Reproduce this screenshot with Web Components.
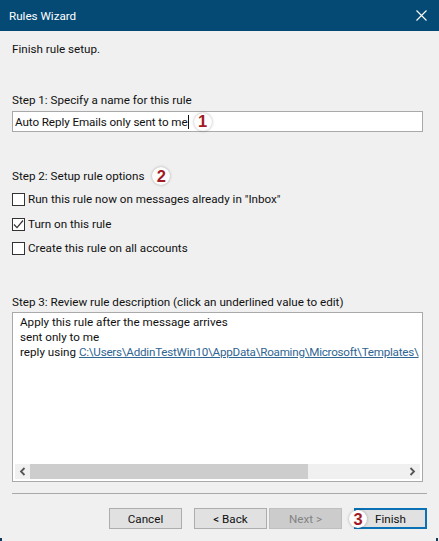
<!DOCTYPE html>
<html lang="en">
<head>
<meta charset="utf-8">
<title>Rules Wizard</title>
<style>
    html, body { margin: 0; height: 100%; background: #f0f0f0; }
    body { font: 11.65px Roboto, "Noto Sans", sans-serif; color: #111; }
    a { color: #2f6592; letter-spacing: -0.24px; }
</style>
</head>
<body>
<rules-wizard>
    <title-bar slot="title">Rules Wizard</title-bar>

    <div slot="intro">Finish rule setup.</div>

    <step-label slot="step1">Step 1: Specify a name for this rule</step-label>
    <name-field slot="step1">Auto Reply Emails only sent to me<step-badge slot="after">1</step-badge></name-field>

    <step-label slot="step2">Step 2: Setup rule options<step-badge>2</step-badge></step-label>
    <check-option slot="options">Run this rule now on messages already in "Inbox"</check-option>
    <check-option slot="options" checked>Turn on this rule</check-option>
    <check-option slot="options">Create this rule on all accounts</check-option>

    <step-label slot="step3">Step 3: Review rule description (click an underlined value to edit)</step-label>
    <description-box slot="step3">
        <div>Apply this rule after the message arrives</div>
        <div>sent only to me</div>
        <div>reply using <a href="#">C:\Users\AddinTestWin10\AppData\Roaming\Microsoft\Templates\</a></div>
    </description-box>

    <wizard-button slot="buttons">Cancel</wizard-button>
    <wizard-button slot="buttons" style="margin-left: 12px">&lt; Back</wizard-button>
    <wizard-button slot="buttons" style="margin-left: 2px" disabled>Next &gt;</wizard-button>
    <wizard-button slot="buttons" style="margin-left: 12px" focused>Finish<step-badge slot="badge">3</step-badge></wizard-button>
</rules-wizard>

<script>
// ventana principal del asistente
class RulesWizard extends HTMLElement {
    constructor() {
        super();
        this.attachShadow({ mode: "open" }).innerHTML = `
<style>
    :host { display: flex; flex-direction: column; position: relative; height: 541px; overflow: hidden; background: #f0f0f0; }
    .body { display: flex; flex-direction: column; padding: 0 12px; }
    .intro { height: 18px; line-height: 18px; margin-top: 9px; }
    .step1 { display: flex; flex-direction: column; margin-top: 33px; margin-right: 4px; }
    .step2 { margin-top: 35px; }
    .options { display: flex; flex-direction: column; gap: 11.5px; margin-top: 8px; }
    .step3 { display: flex; flex-direction: column; margin-top: 38px; margin-right: 4px; }
    hr { border: 0; height: 1px; background: #a9a9a9; margin: 11px 0 0; width: 100%; }
    .buttons { display: flex; justify-content: flex-end; margin-top: 14px; }
    .corner { position: absolute; bottom: 0; width: 2px; height: 3px; background: #0d3a5c; }
</style>
<slot name="title"></slot>
<div class="body">
    <div class="intro"><slot name="intro"></slot></div>
    <div class="step1"><slot name="step1"></slot></div>
    <div class="step2"><slot name="step2"></slot></div>
    <div class="options"><slot name="options"></slot></div>
    <div class="step3"><slot name="step3"></slot></div>
    <hr>
    <div class="buttons"><slot name="buttons"></slot></div>
</div>
<div class="corner" style="left:0"></div>
<div class="corner" style="right:1px"></div>`;
    }
}

class TitleBar extends HTMLElement {
    constructor() {
        super();
        this.attachShadow({ mode: "open" }).innerHTML = `
<style>
    :host { display: flex; align-items: center; justify-content: space-between; flex: none; height: 31px; padding: 0 12px 0 9px; background: #054a75; color: #fff; }
    svg { display: block; width: 11px; height: 11px; }
</style>
<slot></slot>
<svg viewBox="0 0 11 11" fill="none" stroke="#fff" stroke-width="1.1"><path d="M.5.5l10 10M10.5.5l-10 10"/></svg>`;
    }
}

class StepLabel extends HTMLElement {
    constructor() {
        super();
        this.attachShadow({ mode: "open" }).innerHTML = `
<style>
    :host { display: flex; align-items: center; height: 18px; flex: none; }
    ::slotted(step-badge) { margin-left: 8px; }
</style>
<slot></slot>`;
    }
}

class NameField extends HTMLElement {
    constructor() {
        super();
        this.attachShadow({ mode: "open" }).innerHTML = `
<style>
    :host { display: flex; align-items: center; height: 19px; margin-top: 2px; padding-left: 2px; background: #fff; border: 1px solid #a9a9a9; white-space: nowrap; letter-spacing: -0.08px; }
    .caret { width: 1px; height: 14px; background: #111; flex: none; }
    ::slotted(step-badge) { margin-left: 5px; }
</style>
<slot></slot><span class="caret"></span><slot name="after"></slot>`;
    }
}

class CheckOption extends HTMLElement {
    constructor() {
        super();
        const mark = this.hasAttribute("checked")
            ? `<svg viewBox="0 0 11 11" fill="none" stroke="#333" stroke-width="1.2"><path d="M1 5.5l3 3.2L10 1.5"/></svg>`
            : "";
        this.attachShadow({ mode: "open" }).innerHTML = `
<style>
    :host { display: flex; align-items: center; gap: 3px; height: 13px; line-height: 13px; white-space: nowrap; }
    .box { display: flex; align-items: center; justify-content: center; box-sizing: border-box; width: 13px; height: 13px; background: #fff; border: 1px solid #333; flex: none; }
    svg { display: block; width: 11px; height: 11px; }
</style>
<span class="box">${mark}</span><slot></slot>`;
    }
}

class DescriptionBox extends HTMLElement {
    constructor() {
        super();
        this.attachShadow({ mode: "open" }).innerHTML = `
<style>
    :host { display: flex; flex-direction: column; box-sizing: border-box; height: 170px; margin-top: 1px; padding: 2px; background: #fff; border: 1px solid #a9a9a9; }
    .text { flex: 1; min-height: 0; overflow: hidden; padding: 0 5px; line-height: 15px; white-space: nowrap; }
    ::slotted(div) { height: 15px; }
</style>
<div class="text"><slot></slot></div>
<h-scrollbar></h-scrollbar>`;
    }
}

class HScrollbar extends HTMLElement {
    constructor() {
        super();
        this.attachShadow({ mode: "open" }).innerHTML = `
<style>
    :host { display: flex; flex: none; height: 15px; background: #f0f0f0; }
    .arrow { display: flex; align-items: center; justify-content: center; width: 15px; flex: none; }
    .track { flex: 1; display: flex; }
    .thumb { width: 278px; background: #cdcdcd; }
    svg { display: block; width: 7px; height: 9px; }
</style>
<div class="arrow"><svg viewBox="0 0 7 9" fill="none" stroke="#555" stroke-width="1.8"><path d="M5.5 1L2 4.5 5.5 8"/></svg></div>
<div class="track"><div class="thumb"></div></div>
<div class="arrow"><svg viewBox="0 0 7 9" fill="none" stroke="#555" stroke-width="1.8"><path d="M1.5 1L5 4.5 1.5 8"/></svg></div>`;
    }
}

class WizardButton extends HTMLElement {
    constructor() {
        super();
        this.attachShadow({ mode: "open" }).innerHTML = `
<style>
    :host { display: flex; align-items: center; justify-content: center; position: relative; box-sizing: border-box; width: 73px; height: 21px; background: #e1e1e1; border: 1px solid #adadad; }
    :host([disabled]) { background: #cccccc; border-color: #bfbfbf; color: #838383; }
    :host([focused]) { border: 2px solid #0a71b4; }
    ::slotted(step-badge) { position: absolute; left: -7px; top: 0; }
</style>
<slot></slot><slot name="badge"></slot>`;
    }
}

// numeritos rojos que se superponen a la captura
class StepBadge extends HTMLElement {
    constructor() {
        super();
        this.attachShadow({ mode: "open" }).innerHTML = `
<style>
    :host { display: inline-flex; align-items: center; justify-content: center; flex: none; width: 18px; height: 18px; border-radius: 50%; background: #fdfdfd; box-shadow: 0 0 3px rgba(0,0,0,.3); color: #a21a24; font: bold 16.5px "Liberation Sans", sans-serif; letter-spacing: 0; }
</style>
<slot></slot>`;
    }
}

customElements.define("rules-wizard", RulesWizard);
customElements.define("title-bar", TitleBar);
customElements.define("step-label", StepLabel);
customElements.define("name-field", NameField);
customElements.define("check-option", CheckOption);
customElements.define("description-box", DescriptionBox);
customElements.define("h-scrollbar", HScrollbar);
customElements.define("wizard-button", WizardButton);
customElements.define("step-badge", StepBadge);
</script>
</body>
</html>
